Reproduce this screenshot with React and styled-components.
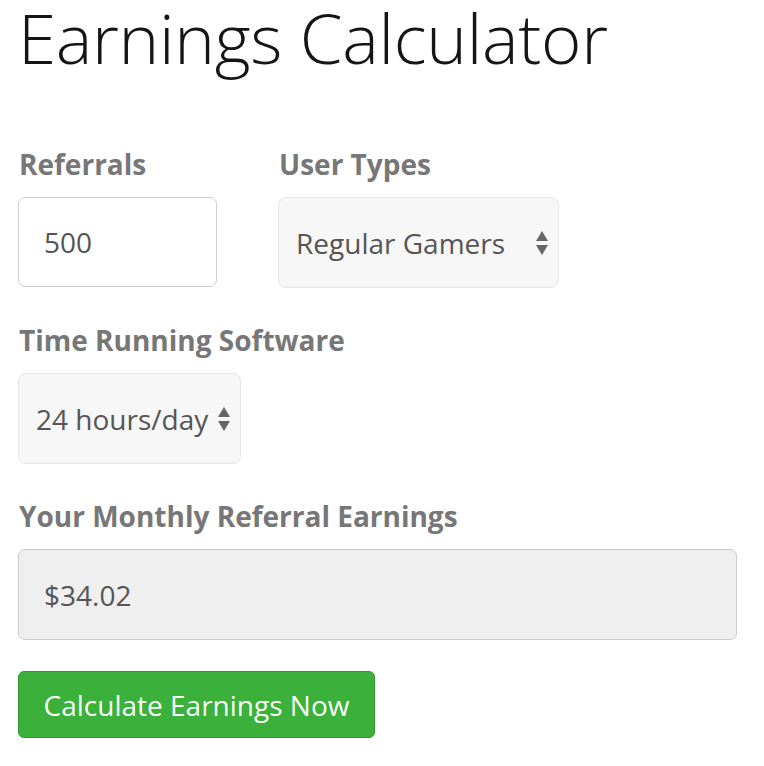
import React from 'react'
import styled, { createGlobalStyle } from 'styled-components'

const labelColor = '#777'
const textColor = '#555'

const GlobalStyle = createGlobalStyle`
  * {
    box-sizing: border-box;
  }
  body {
    margin: 0;
    background: #fff;
    font-family: "Open Sans", "Liberation Sans", sans-serif;
  }
`

const Page = styled.div`
  padding: 0 18px 20px;
`

const Title = styled.h1`
  margin: 0;
  font-weight: 300;
  font-size: 69px;
  line-height: 74px;
  color: #151515;
  letter-spacing: -0.3px;
  white-space: nowrap;
`

const Row = styled.div`
  display: flex;
  gap: 61px;
  margin-top: ${(p) => p.$top || 0}px;
`

const Field = styled.div`
  display: flex;
  flex-direction: column;
`

const Label = styled.label`
  font-weight: 700;
  font-size: 28px;
  line-height: 38px;
  color: ${labelColor};
  margin-bottom: 14px;
  padding-left: 1px;
  white-space: nowrap;
`

const Input = styled.div`
  width: ${(p) => p.$width}px;
  height: 90px;
  border: 1.5px solid #cfcfcf;
  border-radius: 7px;
  background: #fff;
  display: flex;
  align-items: center;
  padding-left: 25px;
  font-size: 28px;
  color: ${textColor};
`

const Output = styled(Input)`
  height: 91px;
  background: #efefef;
  border-color: #cbcbcb;
`

const Select = styled.div`
  width: ${(p) => p.$width}px;
  height: 91px;
  border: 1.5px solid #e6e6e6;
  border-radius: 8px;
  background: #f7f7f7;
  display: flex;
  align-items: center;
  justify-content: space-between;
  padding: 0 9px 0 17px;
  font-size: 28px;
  color: ${textColor};
  white-space: nowrap;
`

const Arrows = styled.svg`
  flex-shrink: 0;
`

const Button = styled.button`
  display: block;
  margin-top: 31px;
  width: 357px;
  height: 67px;
  border: 1.5px solid #2e9a2e;
  border-radius: 6px;
  background: #3bb03b;
  color: #f7fff5;
  font-family: "Open Sans", "Liberation Sans", sans-serif;
  font-size: 28px;
  cursor: pointer;
  padding: 0;
  white-space: nowrap;
`

const SelectArrows = () => (
  <Arrows width="14" height="26" viewBox="0 0 14 26">
    <path d="M7 1 L13 11 L1 11 Z" fill="#666" />
    <path d="M1 15 L13 15 L7 25 Z" fill="#666" />
  </Arrows>
)

const App = () => (
  <>
    <GlobalStyle />
    <Page>
      <Title>Earnings Calculator</Title>
      <Row $top={71}>
        <Field>
          <Label>Referrals</Label>
          <Input $width={199}>500</Input>
        </Field>
        <Field>
          <Label>User Types</Label>
          <Select $width={281}>
            Regular Gamers
            <SelectArrows />
          </Select>
        </Field>
      </Row>
      <Row $top={33}>
        <Field>
          <Label>Time Running Software</Label>
          <Select $width={223}>
            24 hours/day
            <SelectArrows />
          </Select>
        </Field>
      </Row>
      <Row $top={33}>
        <Field>
          <Label>Your Monthly Referral Earnings</Label>
          <Output $width={719}>$34.02</Output>
        </Field>
      </Row>
      <Button>Calculate Earnings Now</Button>
    </Page>
  </>
)

export default App
